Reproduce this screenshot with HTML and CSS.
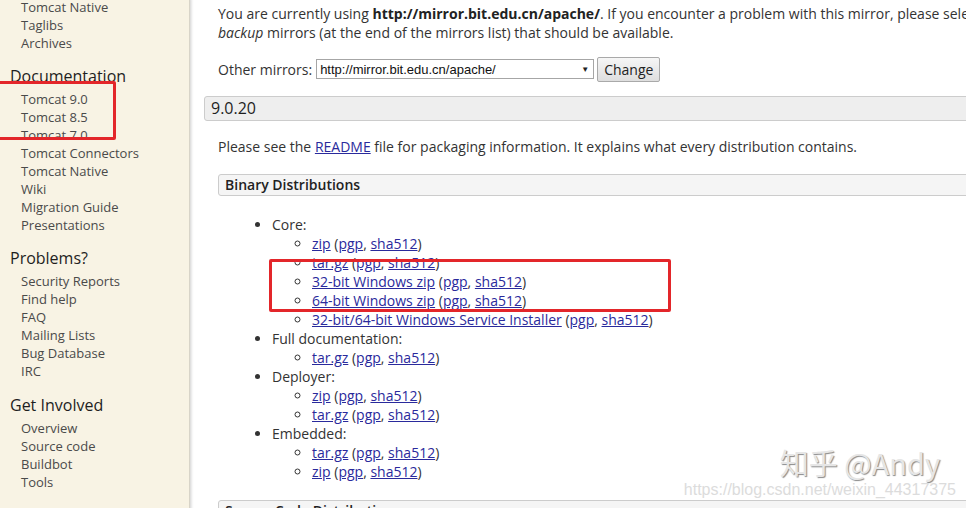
FILE: index.html
```html
<!DOCTYPE html>
<html lang="en">
  <head>
    <meta charset="UTF-8" />
    <meta name="viewport" content="width=device-width, initial-scale=1.0" />
    <title>Apache Tomcat - Download</title>
    <link rel="stylesheet" href="styles.css">
  </head>
  <body>
    <div class="page">
      <div class="sidebar">
        <ul class="nav">
          <li>Tomcat Native</li>
          <li>Taglibs</li>
          <li>Archives</li>
        </ul>
        <h2>Documentation</h2>
        <ul class="nav">
          <li>Tomcat 9.0</li>
          <li>Tomcat 8.5</li>
          <li>Tomcat 7.0</li>
          <li>Tomcat Connectors</li>
          <li>Tomcat Native</li>
          <li>Wiki</li>
          <li>Migration Guide</li>
          <li>Presentations</li>
        </ul>
        <h2>Problems?</h2>
        <ul class="nav">
          <li>Security Reports</li>
          <li>Find help</li>
          <li>FAQ</li>
          <li>Mailing Lists</li>
          <li>Bug Database</li>
          <li>IRC</li>
        </ul>
        <h2 class="involved">Get Involved</h2>
        <ul class="nav">
          <li>Overview</li>
          <li>Source code</li>
          <li>Buildbot</li>
          <li>Tools</li>
        </ul>
      </div>

      <div class="main">
        <p class="intro">
          You are currently using <b>http://mirror.bit.edu.cn/apache/</b>. If you encounter a problem with this mirror, please select another mirror. If all mirrors are failing, there are<br>
          <i>backup</i> mirrors (at the end of the mirrors list) that should be available.
        </p>
        <div class="mirrors">
          Other mirrors:
          <span class="select">http://mirror.bit.edu.cn/apache/<span class="arrow">&#9660;</span></span>
          <span class="change">Change</span>
        </div>

        <h3 class="version">9.0.20</h3>
        <p class="text">Please see the <a href="#">README</a> file for packaging information. It explains what every distribution contains.</p>

        <h4 class="section">Binary Distributions</h4>
        <ul class="dist">
          <li>Core:
            <ul>
              <li><a href="#">zip</a> (<a href="#">pgp</a>, <a href="#">sha512</a>)</li>
              <li><a href="#">tar.gz</a> (<a href="#">pgp</a>, <a href="#">sha512</a>)</li>
              <li><a href="#">32-bit Windows zip</a> (<a href="#">pgp</a>, <a href="#">sha512</a>)</li>
              <li><a href="#">64-bit Windows zip</a> (<a href="#">pgp</a>, <a href="#">sha512</a>)</li>
              <li><a href="#">32-bit/64-bit Windows Service Installer</a> (<a href="#">pgp</a>, <a href="#">sha512</a>)</li>
            </ul>
          </li>
          <li>Full documentation:
            <ul>
              <li><a href="#">tar.gz</a> (<a href="#">pgp</a>, <a href="#">sha512</a>)</li>
            </ul>
          </li>
          <li>Deployer:
            <ul>
              <li><a href="#">zip</a> (<a href="#">pgp</a>, <a href="#">sha512</a>)</li>
              <li><a href="#">tar.gz</a> (<a href="#">pgp</a>, <a href="#">sha512</a>)</li>
            </ul>
          </li>
          <li>Embedded:
            <ul>
              <li><a href="#">tar.gz</a> (<a href="#">pgp</a>, <a href="#">sha512</a>)</li>
              <li><a href="#">zip</a> (<a href="#">pgp</a>, <a href="#">sha512</a>)</li>
            </ul>
          </li>
        </ul>

        <h4 class="section">Source Code Distributions</h4>
      </div>
    </div>

    <div class="mark mark-left"></div>
    <div class="mark mark-main"></div>

    <div class="watermark">
      <div class="wm-big">知乎 @Andy</div>
      <div class="wm-url">https://blog.csdn.net/weixin_44317375</div>
    </div>
  </body>
</html>
```

FILE: styles.css
```css
:root {
  --side-bg: #f8f3e4;
  --text-color: #333333;
  --nav-color: #4a4a4a;
  --link-color: #2a2a9c;
  --mark-color: #e3262a;
}

body {
  margin: 0;
  overflow: hidden;
  background-color: #ffffff;
  color: var(--text-color);
  font-family: "Open Sans", Arial, sans-serif;
}

.page {
  display: flex;
  width: 1400px;
  min-height: 508px;
}

.sidebar {
  width: 189px;
  flex-shrink: 0;
  margin-top: -2px;
  padding-bottom: 40px;
  background-color: var(--side-bg);
  border-right: 1px solid #d8d4c8;
  box-shadow: 1px 0 3px rgba(0, 0, 0, 0.2);
}

.sidebar h2 {
  margin: 13px 0 3px 10px;
  font-size: 16px;
  font-weight: normal;
  line-height: 22px;
  color: #1e1e1e;
}

.sidebar .involved {
  margin-top: 14px;
}

.nav {
  list-style: none;
  margin: 0;
  padding: 0 0 0 21px;
}

.nav li {
  font-size: 13px;
  line-height: 18px;
  color: var(--nav-color);
}

.main {
  flex: 1;
  padding: 4px 0 0 14px;
  font-size: 14px;
  line-height: 19px;
}

.intro {
  margin: 0 0 0 14px;
  white-space: nowrap;
}

.intro b {
  font-weight: bold;
  color: #222;
}

.mirrors {
  margin: 15px 0 0 14px;
  display: flex;
  align-items: center;
  gap: 3px;
  height: 24px;
}

.select {
  display: inline-flex;
  justify-content: space-between;
  align-items: center;
  box-sizing: border-box;
  width: 278px;
  height: 20px;
  padding: 0 4px 0 3px;
  margin-left: 1px;
  border: 1px solid #a6a6a6;
  font-family: Arial, "Liberation Sans", sans-serif;
  font-size: 13px;
  color: #111;
  background-color: #fff;
}

.arrow {
  font-size: 8px;
  color: #222;
}

.change {
  display: inline-flex;
  align-items: center;
  box-sizing: border-box;
  height: 25px;
  padding: 0 6px;
  border: 1px solid #a9a9a9;
  border-radius: 2px;
  background: linear-gradient(#f6f6f6, #dedede);
  color: #222;
}

.version {
  margin: 15px 0 0 0;
  box-sizing: border-box;
  height: 25px;
  padding: 0 6px;
  font-size: 16px;
  font-weight: normal;
  line-height: 23px;
  color: #1e1e1e;
  background-color: #eeeeee;
  border: 1px solid #cccccc;
  border-radius: 3px;
}

.text {
  margin: 16px 0 0 14px;
}

a {
  color: var(--link-color);
  text-decoration: underline;
}

.section {
  margin: 18px 0 0 14px;
  box-sizing: border-box;
  height: 22px;
  padding: 0 6px;
  font-size: 14px;
  font-weight: 600;
  line-height: 20px;
  color: #222;
  background-color: #f5f5f5;
  border: 1px solid #cccccc;
  border-radius: 3px;
}

.dist {
  margin: 19px 0 0 14px;
  padding-left: 54px;
  list-style: disc;
}

.dist ul {
  margin: 0;
  padding-left: 40px;
  list-style: circle;
}

.dist + .section {
  margin-top: 19px;
}

.mark {
  position: absolute;
  border: 3px solid var(--mark-color);
  border-radius: 2px;
}

.mark-left {
  left: -3px;
  top: 81px;
  width: 113px;
  height: 53px;
}

.mark-main {
  left: 269px;
  top: 259px;
  width: 396px;
  height: 47px;
}

.watermark {
  position: absolute;
  right: 10px;
  top: 443px;
  text-align: right;
  pointer-events: none;
}

.wm-big {
  margin-right: 16px;
  font-family: "Noto Sans CJK SC", "Noto Sans", sans-serif;
  font-size: 29px;
  line-height: 38px;
  color: #e6e6e6;
  text-shadow: 1px 1px 1px #8a8a8a;
}

.wm-url {
  font-family: Arial, "Liberation Sans", sans-serif;
  font-size: 16px;
  line-height: 18px;
  color: #dcdcdc;
}
```
